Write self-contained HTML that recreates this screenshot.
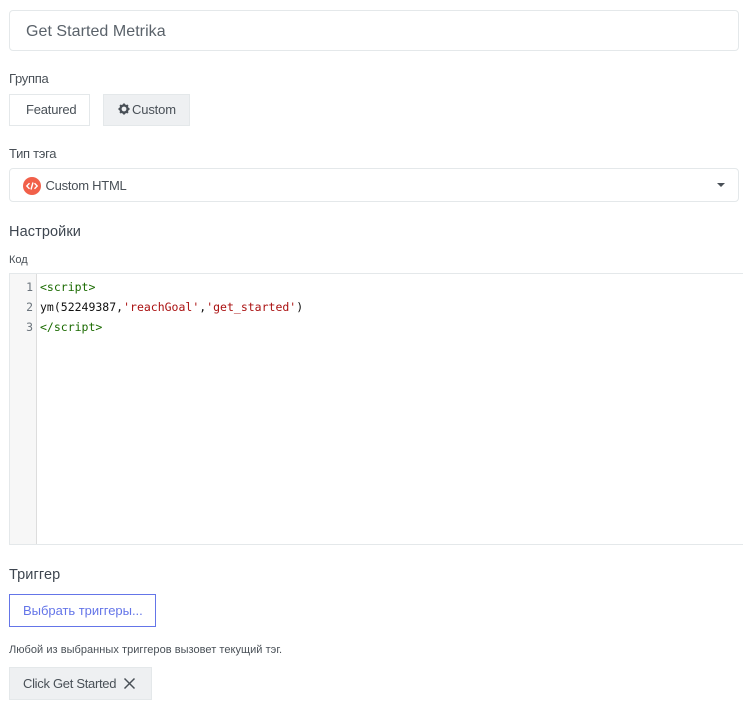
<!DOCTYPE html>
<html><head><meta charset="utf-8"><style>
html,body{margin:0;padding:0;background:#fff}
body{width:743px;height:717px;position:relative;overflow:hidden;font-family:"Liberation Sans",sans-serif;color:#495057}
.a{position:absolute;box-sizing:border-box;white-space:nowrap}
.l{font-size:13px;line-height:16px;color:#495057;letter-spacing:-.3px}
.h{font-size:14.5px;line-height:18px;color:#3e4650;letter-spacing:.1px}
.c{font-family:"DejaVu Sans Mono",monospace;font-size:11.5px;line-height:20px;color:#111}
.n{color:#6c757d;text-align:right;width:28px;left:5px}
.g{color:#1a6a00}.s{color:#aa1111}
</style></head><body>
<div class="a" style="left:9px;top:10px;width:730px;height:41px;border:1px solid #e4e8ea;border-radius:4px;font-size:16px;line-height:41px;padding-left:16px;color:#5a626a;letter-spacing:.05px">Get Started Metrika</div>
<div class="a l" style="left:9px;top:71px">Группа</div>
<div class="a" style="left:9px;top:94px;width:81px;height:32px;border:1px solid #e4e8ea;font-size:13px;line-height:30px;padding-left:16px;letter-spacing:-.2px">Featured</div>
<div class="a" style="left:103px;top:94px;width:87px;height:32px;border:1px solid #e4e8ea;background:#eef0f2;font-size:13px;line-height:30px;padding-left:28px;letter-spacing:-.15px">Custom</div>
<svg class="a" style="left:118px;top:103px" width="12" height="12" viewBox="0 0 12 12"><circle cx="6" cy="6" r="3.6" fill="none" stroke="#495057" stroke-width="2.4"/><path d="M6 .5V2.5M6 9.5V11.5M.5 6H2.5M9.5 6H11.5M2.1 2.1L3.5 3.5M8.5 8.5L9.9 9.9M2.1 9.9L3.5 8.5M8.5 3.5L9.9 2.1" stroke="#495057" stroke-width="1.9"/></svg>
<div class="a l" style="left:9px;top:146px">Тип тэга</div>
<div class="a" style="left:9px;top:168px;width:730px;height:34px;border:1px solid #e4e8ea;border-radius:4px;font-size:13px;line-height:33px;padding-left:35.5px;letter-spacing:-.25px">Custom HTML</div>
<svg class="a" style="left:23px;top:177px" width="18" height="18" viewBox="0 0 18 18"><circle cx="9" cy="9" r="9" fill="#f1604a"/><path d="M6.5 6.2L3.8 9L6.5 11.8M11.5 6.2L14.2 9L11.5 11.8M10 5.5L8 12.5" fill="none" stroke="#fff" stroke-width="1.4"/></svg>
<div class="a" style="left:717px;top:183px;width:0;height:0;border-left:4px solid transparent;border-right:4px solid transparent;border-top:4px solid #495057"></div>
<div class="a h" style="left:9px;top:223px">Настройки</div>
<div class="a" style="left:9px;top:253px;font-size:11px;line-height:14px;color:#495057">Код</div>
<div class="a" style="left:9px;top:273px;width:734px;height:272px;border-top:1px solid #e4e8ea;border-bottom:1px solid #e4e8ea;border-left:1px solid #e4e8ea"></div>
<div class="a" style="left:10px;top:274px;width:27px;height:270px;background:#f7f7f7;border-right:1px solid #ddd"></div>
<div class="a c n" style="top:277px">1</div>
<div class="a c n" style="top:297px">2</div>
<div class="a c n" style="top:317px">3</div>
<div class="a c g" style="left:40px;top:277px">&lt;script&gt;</div>
<div class="a c" style="left:40px;top:297px">ym(52249387,<span class="s">'reachGoal'</span>,<span class="s">'get_started'</span>)</div>
<div class="a c g" style="left:40px;top:317px">&lt;/script&gt;</div>
<div class="a h" style="left:9px;top:566px">Триггер</div>
<div class="a" style="left:9px;top:594px;width:147px;height:33px;border:1px solid #6475e8;font-size:13px;line-height:31px;padding-left:13px;color:#6475e8;letter-spacing:-.03px">Выбрать триггеры...</div>
<div class="a" style="left:9px;top:643px;font-size:11px;line-height:14px;color:#495057;letter-spacing:.04px">Любой из выбранных триггеров вызовет текущий тэг.</div>
<div class="a" style="left:9px;top:667px;width:143px;height:33px;border:1px solid #e4e8ea;background:#eef0f2;font-size:13px;line-height:31px;padding-left:13px;letter-spacing:-.3px">Click Get Started</div>
<svg class="a" style="left:123px;top:677px" width="13" height="13" viewBox="0 0 13 13"><path d="M1.5 1.5L11.5 11.5M11.5 1.5L1.5 11.5" stroke="#495057" stroke-width="1.5"/></svg>
</body></html>
